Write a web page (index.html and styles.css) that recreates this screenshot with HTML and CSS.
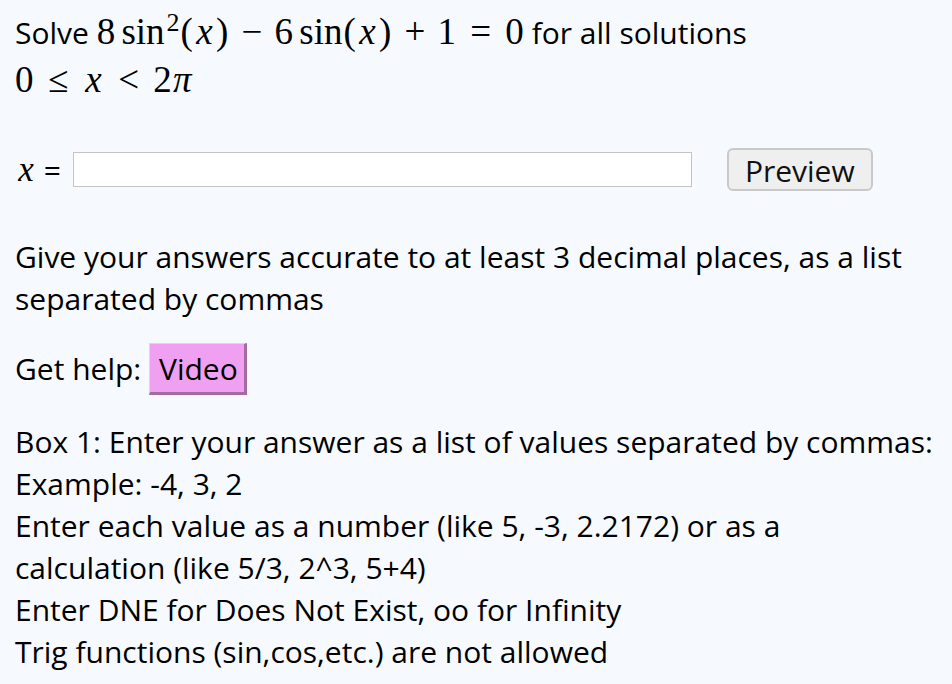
FILE: index.html
```html
<!DOCTYPE html>
<html lang="en">
<head>
    <meta charset="UTF-8">
    <title>Question</title>
    <link rel="stylesheet" href="styles.css">
</head>
<body>
    <div class="question">
        <p class="prompt">
            Solve <span class="math">8<span class="thin"></span>sin<sup>2</sup><span class="mo">(</span><i class="mi">x</i><span class="mo">)</span><span class="bin">&minus;</span>6<span class="thin"></span>sin<span class="mo">(</span><i class="mi">x</i><span class="mo">)</span><span class="bin">+</span>1<span class="rel">=</span>0</span> for all solutions<br>
            <span class="math">0<span class="rel">&le;</span><i class="mi">x</i><span class="rel">&lt;</span>2<i class="mi">&pi;</i></span>
        </p>

        <div class="answer-row">
            <label class="answer-label" for="qn0"><span class="math"><i class="mi">x</i></span> =</label>
            <input type="text" id="qn0" class="answer-box">
            <button class="preview-btn">Preview</button>
        </div>

        <p class="note">Give your answers accurate to at least 3 decimal places, as a list separated by commas</p>

        <p class="help">Get help: <a class="video-btn" href="#">Video</a></p>

        <div class="hints">
            Box 1: Enter your answer as a list of values separated by commas:<br>
            Example: -4, 3, 2<br>
            Enter each value as a number (like 5, -3, 2.2172) or as a calculation (like 5/3, 2^3, 5+4)<br>
            Enter DNE for Does Not Exist, oo for Infinity<br>
            Trig functions (sin,cos,etc.) are not allowed
        </div>
    </div>
</body>
</html>
```

FILE: styles.css
```css
body {
    margin: 0;
    padding: 0 15px;
    background-color: #f6faff;
    font-family: "Open Sans", sans-serif;
    font-size: 30px;
    line-height: 42px;
    color: #000;
}
p {
    margin: 0;
}
.math {
    font-family: "Liberation Serif", serif;
    font-size: 37px;
    white-space: nowrap;
}
.math sup {
    font-size: 26px;
    line-height: 0;
    margin-left: 2px;
}
.mi {
    display: inline-block;
    width: 0.57em;
    text-align: center;
}
.mo {
    display: inline-block;
    width: 0.389em;
    text-align: center;
}
.thin {
    display: inline-block;
    width: 0.167em;
}
.bin {
    display: inline-block;
    width: 0.778em;
    margin: 0 0.222em;
    text-align: center;
}
.rel {
    display: inline-block;
    width: 0.778em;
    margin: 0 0.278em;
    text-align: center;
}
.prompt {
    padding-top: 8px;
    line-height: 47px;
}
.answer-row {
    display: flex;
    align-items: center;
    margin-top: 44px;
}
.answer-label {
    margin-right: 12px;
}
.answer-label .math {
    font-size: 35px;
    margin-left: 1px;
}
.answer-box {
    width: 619px;
    height: 35px;
    box-sizing: border-box;
    border: 1px solid #c4c4c4;
    background: #fff;
    margin: 0;
}
.preview-btn {
    margin-left: 35px;
    height: 43px;
    padding: 0 16px;
    font-family: "Open Sans", sans-serif;
    font-size: 30px;
    background-color: #efefef;
    border: 2px solid #c9c9c9;
    border-radius: 6px;
    color: #111;
}
.note {
    margin-top: 45px;
}
.help {
    display: flex;
    align-items: center;
    margin-top: 23px;
    white-space: pre;
}
.video-btn {
    display: inline-block;
    background-color: #f0a0f0;
    color: #000;
    text-decoration: none;
    padding: 4px 6px 2px 9px;
    border-style: solid;
    border-width: 1px 3px 3px 1px;
    border-color: #f6c6f6 #a46aa4 #a46aa4 #f6c6f6;
}
.hints {
    margin-top: 26px;
}
```
